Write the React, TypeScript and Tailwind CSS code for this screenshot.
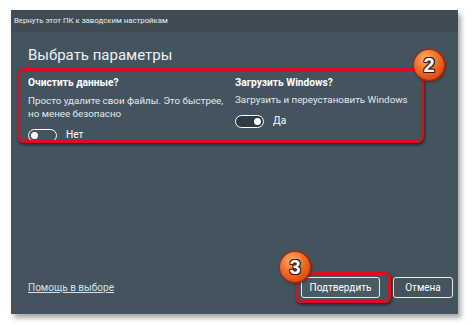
import React from "react";

function Badge({ n, className }: { n: string; className: string }) {
  return (
    <div
      className={`absolute w-[30px] h-[30px] rounded-full flex items-center justify-center ${className}`}
      style={{
        background: "radial-gradient(circle at 40% 30%, #ffb070 0%, #f26a24 45%, #c8360c 100%)",
        boxShadow: "0 0 0 1.5px #a02a0a, 1px 2px 3px rgba(0,0,0,0.5)",
      }}
    >
      <span
        className="text-white font-bold text-[20px] leading-none"
        style={{
          fontFamily: "'Liberation Sans', Arial, sans-serif",
          textShadow:
            "-1px -1px 0 #3a1a10, 1px -1px 0 #3a1a10, -1px 1px 0 #3a1a10, 1px 1px 0 #3a1a10, 0 1px 0 #3a1a10, 0 -1px 0 #3a1a10, 1px 0 0 #3a1a10, -1px 0 0 #3a1a10",
        }}
      >
        {n}
      </span>
    </div>
  );
}

export default function App() {
  return (
    <div
      className="relative w-[474px] h-[325px] bg-white overflow-hidden"
      style={{ fontFamily: "Roboto, Lato, sans-serif" }}
    >
      <div className="absolute left-[11px] top-[10px] w-[447px] h-[304px] flex flex-col bg-[#43545f] shadow-[3px_4px_5px_rgba(0,0,0,0.35)] text-white">
        <div className="h-[22px] bg-[#3f4c55] flex items-center pl-[3px] text-[7.8px] text-[#e8ecef]">
          Вернуть этот ПК к заводским настройкам
        </div>
        <div className="flex-1 flex flex-col pl-[17px] pr-[3px]">
          <div className="mt-[9px] text-[15px] leading-[28px] text-[#eef1f3]">Выбрать параметры</div>
          <div className="flex mt-[6px]">
            <div className="w-[207px] flex flex-col">
              <div className="text-[10.2px] leading-[16px] font-bold">Очистить данные?</div>
              <div className="mt-[4px] text-[9.8px] leading-[12.5px] text-[#e4e9ec] whitespace-nowrap">
                Просто удалите свои файлы. Это быстрее,
                <br />
                но менее безопасно
              </div>
              <div className="mt-[8px] flex items-center gap-[9px]">
                <div className="w-[29px] h-[13px] rounded-full border border-white flex items-center px-[2px]">
                  <div className="w-[7px] h-[7px] rounded-full bg-white" />
                </div>
                <span className="text-[10.2px] leading-[14px]">Нет</span>
              </div>
            </div>
            <div className="flex flex-col">
              <div className="text-[10.2px] leading-[16px] font-bold">Загрузить Windows?</div>
              <div className="mt-[2px] text-[9.8px] leading-[13px] text-[#e4e9ec] whitespace-nowrap">
                Загрузить и переустановить Windows
              </div>
              <div className="mt-[8px] flex items-center gap-[9px]">
                <div className="w-[29px] h-[13px] rounded-full border border-white bg-[#2f3a41] flex items-center justify-end px-[2px]">
                  <div className="w-[7px] h-[7px] rounded-full bg-white" />
                </div>
                <span className="text-[10.2px] leading-[14px]">Да</span>
              </div>
            </div>
          </div>
          <div className="flex-1" />
          <div className="flex items-center pb-[16px]">
            <span className="text-[10px] underline text-[#d9e0e5]">Помощь в выборе</span>
            <div className="flex-1" />
            <div className="flex gap-[13px] pr-[2px]">
              <div className="w-[79px] h-[21px] rounded-[3px] border border-[#e6eaed] bg-[#4a5a65] flex items-center justify-center text-[10px]">
                Подтвердить
              </div>
              <div className="w-[60px] h-[21px] rounded-[3px] border border-[#e6eaed] flex items-center justify-center text-[10px]">
                Отмена
              </div>
            </div>
          </div>
        </div>
      </div>

      <div className="absolute left-[17px] top-[68px] w-[407px] h-[75px] rounded-[7px] border-[3px] border-[#d8101c] shadow-[1px_2px_3px_rgba(0,0,0,0.55)]" />
      <div className="absolute left-[295px] top-[272px] w-[96px] h-[31px] rounded-[6px] border-[3px] border-[#d8101c] shadow-[1px_2px_3px_rgba(0,0,0,0.55)]" />
      <Badge n="2" className="left-[414px] top-[50px]" />
      <Badge n="3" className="left-[280px] top-[252px]" />
    </div>
  );
}
